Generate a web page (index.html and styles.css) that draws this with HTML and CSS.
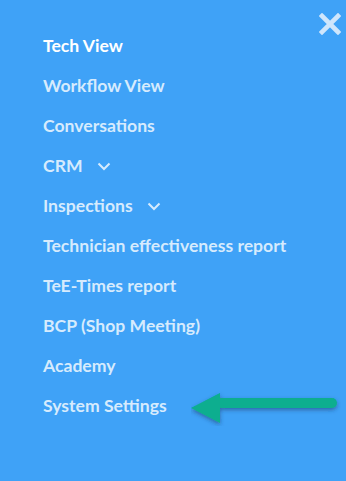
FILE: index.html
```html
<!DOCTYPE html>
<html>
<head>
<meta charset="utf-8">
<link rel="stylesheet" href="styles.css">
</head>
<body>
<div class="panel">
  <button class="close" aria-label="Close">
    <svg width="22" height="22" viewBox="0 0 22 22"><path d="M3 3 L19 19 M19 3 L3 19" stroke="#cfe6fc" stroke-width="4.6" stroke-linecap="square"/></svg>
  </button>
  <nav class="menu">
    <a class="item active">Tech View</a>
    <a class="item">Workflow View</a>
    <a class="item">Conversations</a>
    <a class="item">CRM <svg class="chev" width="14" height="9" viewBox="0 0 14 9"><path d="M1.5 1.5 L7 7 L12.5 1.5" fill="none" stroke="#d6ebfd" stroke-width="2"/></svg></a>
    <a class="item">Inspections <svg class="chev" width="14" height="9" viewBox="0 0 14 9"><path d="M1.5 1.5 L7 7 L12.5 1.5" fill="none" stroke="#d6ebfd" stroke-width="2"/></svg></a>
    <a class="item">Technician effectiveness report</a>
    <a class="item">TeE-Times report</a>
    <a class="item">BCP (Shop Meeting)</a>
    <a class="item">Academy</a>
    <a class="item">System Settings</a>
  </nav>
  <svg class="arrow" width="150" height="40" viewBox="0 0 150 40">
    <defs>
      <filter id="sh" x="-10%" y="-30%" width="120%" height="160%">
        <feDropShadow dx="0" dy="2" stdDeviation="2" flood-color="#1a3a6a" flood-opacity="0.55"/>
      </filter>
    </defs>
    <g filter="url(#sh)">
      <path d="M30 17 L141 17" stroke="#08ae8f" stroke-width="10" stroke-linecap="round"/>
      <path d="M0 22 L29 7 L29 37 Z" fill="#08ae8f"/>
    </g>
  </svg>
</div>
</body>
</html>
```
FILE: styles.css
```css
html, body {
  margin: 0;
  padding: 0;
}
body {
  width: 346px;
  height: 481px;
  background: #3fa2f7;
  font-family: "Lato", "Liberation Sans", sans-serif;
  overflow: hidden;
}
.panel {
  position: relative;
  width: 346px;
  height: 481px;
}
.close {
  position: absolute;
  top: 13px;
  right: 5px;
  width: 22px;
  height: 22px;
  padding: 0;
  border: 0;
  background: none;
}
.close svg { display: block; }
.menu {
  display: flex;
  flex-direction: column;
  padding: 25px 0 0 43px;
}
.item {
  display: flex;
  align-items: center;
  height: 40px;
  font-size: 17.6px;
  font-weight: 700;
  color: #d6ebfd;
  white-space: nowrap;
}
.item.active {
  color: #ffffff;
}
.chev {
  margin-left: 14px;
  margin-top: 2px;
}
.arrow {
  position: absolute;
  left: 191px;
  top: 386px;
}
```
